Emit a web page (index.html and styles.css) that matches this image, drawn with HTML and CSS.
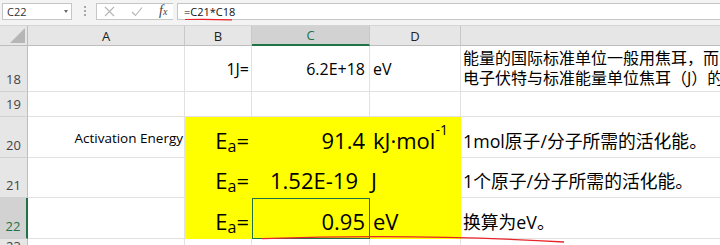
FILE: index.html
```html
<!DOCTYPE html>
<html lang="zh">
<head>
    <meta charset="UTF-8">
    <title>Activation Energy</title>
    <link rel="stylesheet" href="styles.css">
</head>
<body>
    <div class="formula-bar">
        <div class="name-box"><span>C22</span><span class="caret"></span></div>
        <div class="grip"><i></i><i></i><i></i></div>
        <div class="fx-buttons">
            <svg class="btn" width="11" height="11" viewBox="0 0 11 11"><path d="M1 1 L10 10 M10 1 L1 10" stroke="#b4b4b4" stroke-width="1.1" fill="none"/></svg>
            <svg class="btn" width="12" height="11" viewBox="0 0 12 11"><path d="M1 6 L4.5 9.5 L11 1.5" stroke="#b4b4b4" stroke-width="1.1" fill="none"/></svg>
            <span class="btn-fx">f<small>x</small></span>
        </div>
        <div class="formula-input">=C21*C18</div>
    </div>

    <div class="sheet">
        <div class="corner"></div>
        <div class="hd">A</div>
        <div class="hd">B</div>
        <div class="hd sel">C</div>
        <div class="hd">D</div>
        <div class="hd"></div>

        <div class="rh">18</div>
        <div class="c mid"></div>
        <div class="c mid sm right">1J=</div>
        <div class="c mid sm right pr4">6.2E+18</div>
        <div class="c mid sm">eV</div>
        <div class="c mid cn wrap">能量的国际标准单位一般用焦耳，而能量单位<br>电子伏特与标准能量单位焦耳（J）的换算</div>

        <div class="rh">19</div>
        <div class="c"></div>
        <div class="c"></div>
        <div class="c"></div>
        <div class="c"></div>
        <div class="c"></div>

        <div class="rh">20</div>
        <div class="c mid xs right">Activation Energy</div>
        <div class="c big yel right">E<sub>a</sub>=</div>
        <div class="c big yel right pr4">91.4</div>
        <div class="c big yel">kJ·mol<sup>-1</sup></div>
        <div class="c cn lg">1mol原子/分子所需的活化能。</div>

        <div class="rh">21</div>
        <div class="c"></div>
        <div class="c big yel right">E<sub>a</sub>=</div>
        <div class="c big yel right pr11">1.52E-19</div>
        <div class="c big yel tight">J</div>
        <div class="c cn lg">1个原子/分子所需的活化能。</div>

        <div class="rh sel">22</div>
        <div class="c"></div>
        <div class="c big yel right">E<sub>a</sub>=</div>
        <div class="c big yel right pr4 active">0.95</div>
        <div class="c big yel">eV</div>
        <div class="c cn lg">换算为eV。</div>

        <div class="rh">23</div>
        <div class="c"></div>
        <div class="c"></div>
        <div class="c"></div>
        <div class="c"></div>
        <div class="c"></div>
    </div>

    <!-- red pen marks drawn over the screenshot -->
    <svg class="ink" width="720" height="245" viewBox="0 0 720 245">
        <path d="M185 19.5 Q208 19 232 19.8" stroke="#e8242a" stroke-width="1.2" fill="none"/>
        <path d="M262 238.6 Q420 233.5 564 242" stroke="#e8242a" stroke-width="1.3" fill="none"/>
    </svg>
</body>
</html>
```

FILE: styles.css
```css
body {
    margin: 0; padding: 0; width: 720px; height: 245px; overflow: hidden; position: relative;
    font-family: "Open Sans", "Noto Sans CJK SC", sans-serif; background-color: #fff; color: #000;
}
.formula-bar {
    height: 26px; box-sizing: border-box; padding: 3px 0 0 2px; display: flex; align-items: flex-start;
    background-color: #f3f3f3; border-bottom: 1px solid #d4d4d4;
}
.name-box {
    width: 70px; height: 17px; box-sizing: border-box; border: 1px solid #c6c6c6; background-color: #fff;
    display: flex; align-items: center; justify-content: space-between; padding: 0 3px 0 4px;
    font-size: 11px; color: #333;
}
.caret {
    width: 0; height: 0; border-left: 2.5px solid transparent; border-right: 2.5px solid transparent; border-top: 3px solid #666;
}
.grip {
    width: 3px; margin: 3px 9px 0 12px; display: flex; flex-direction: column; gap: 2px;
}
.grip i {
    display: block; width: 2px; height: 2px; background-color: #a8a8a8;
}
.fx-buttons {
    width: 77px; height: 17px; box-sizing: border-box; border: 1px solid #c6c6c6; border-right: none; background-color: #fff;
    display: flex; align-items: center; padding-left: 7px; gap: 16px;
}
.btn-fx {
    font-family: "Liberation Serif", serif; font-style: italic; font-size: 14px; color: #444; line-height: 14px;
}
.btn-fx small {
    font-size: 10px;
}
.formula-input {
    flex: 1; height: 17px; box-sizing: border-box; margin-left: 4px; border: 1px solid #c6c6c6; border-right: none;
    background-color: #fff; font-size: 11px; line-height: 15px; padding-left: 6px; color: #111;
}
.sheet {
    display: grid; width: 761px;
    grid-template-columns: 28px 157px 67px 118px 91px 300px;
    grid-template-rows: 20px 46px 25px 41px 40px 41px 20px;
}
.corner {
    background-color: #e6e6e6; border-right: 1px solid #bdbdbd; border-bottom: 1px solid #bdbdbd; position: relative;
}
.corner::after {
    content: ""; position: absolute; right: 2px; bottom: 2px; width: 0; height: 0;
    border-left: 15px solid transparent; border-bottom: 15px solid #b6b6b6;
}
.hd {
    background-color: #e6e6e6; border-right: 1px solid #c8c8c8; border-bottom: 1px solid #bdbdbd;
    display: flex; align-items: center; justify-content: center; font-size: 13px; color: #222;
}
.hd.sel {
    background-color: #d2d2d2; color: #217346; border-bottom: 2px solid #217346;
}
.rh {
    background-color: #e6e6e6; border-right: 1px solid #bdbdbd; border-bottom: 1px solid #d0d0d0;
    display: flex; align-items: flex-end; justify-content: center; padding-bottom: 3px; box-sizing: border-box;
    font-size: 13px; color: #444;
}
.rh.sel {
    background-color: #d2d2d2; color: #217346; border-right: 2px solid #217346;
}
.c {
    border-right: 1px solid #e1e1e1; border-bottom: 1px solid #e1e1e1; box-sizing: border-box;
    display: flex; align-items: center; padding: 5px 3px 0; white-space: nowrap; min-width: 0;
}
.c.mid { padding-top: 1px; }
.right { justify-content: flex-end; padding-right: 2px; }
.pr4 { padding-right: 4px; }
.pr11 { padding-right: 11px; }
.tight { padding-left: 1px; }
.sm { font-size: 16px; }
.xs { font-size: 13.5px; padding-right: 1px; padding-top: 2px; }
.big { font-size: 22px; line-height: 28px; }
.big sub { font-size: 16px; vertical-align: baseline; position: relative; top: 6px; }
.big sup { font-size: 14px; vertical-align: baseline; position: relative; top: -10px; }
.yel { background-color: #ffff00; border-color: #ffff00; }
.active { outline: 1px solid #217346; outline-offset: -1px; }
.cn { font-size: 16px; padding-left: 2px; overflow: hidden; }
.cn.lg { font-size: 17.8px; }
.wrap { line-height: 20px; padding-top: 0; padding-bottom: 3px; }
.ink {
    position: absolute; left: 0; top: 0; pointer-events: none;
}
```
